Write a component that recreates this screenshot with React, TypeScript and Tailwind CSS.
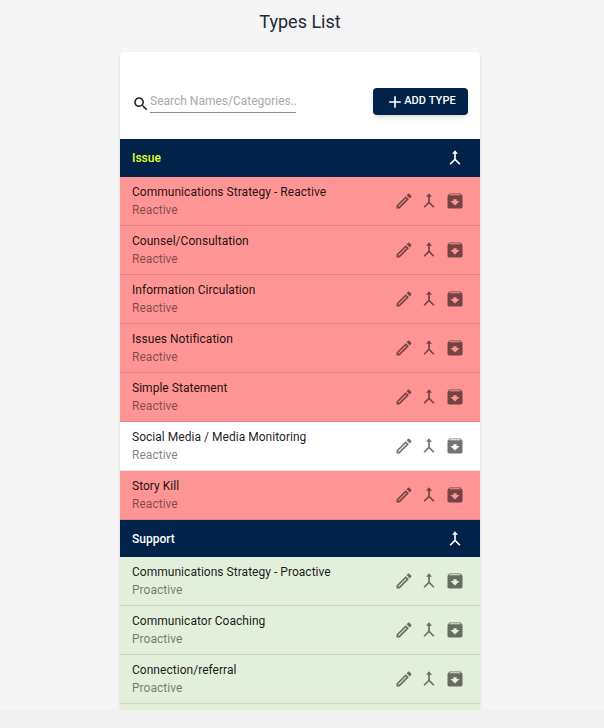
const font = "font-['Roboto','Liberation_Sans',sans-serif]";

const paths = {
  search: "M15.5 14h-.79l-.28-.27C15.41 12.59 16 11.11 16 9.5 16 5.91 13.09 3 9.5 3S3 5.91 3 9.5 5.91 16 9.5 16c1.61 0 3.09-.59 4.23-1.57l.27.28v.79l5 4.99L20.49 19l-4.99-5zm-6 0C7.01 14 5 11.99 5 9.5S7.01 5 9.5 5 14 7.01 14 9.5 11.99 14 9.5 14z",
  add: "M19 13h-6v6h-2v-6H5v-2h6V5h2v6h6v2z",
  merge: "M12 2.8L15.6 7H13V13.2L18.6 18.8L17.2 20.2L12 15L6.8 20.2L5.4 18.8L11 13.2V7H8.4Z",
  edit: "M14.06 9.02l.92.92L5.92 19H5v-.92l9.06-9.06M17.66 3c-.25 0-.51.1-.7.29l-1.83 1.83 3.75 3.75 1.83-1.83c.39-.39.39-1.02 0-1.41l-2.34-2.34c-.2-.2-.45-.29-.71-.29zm-3.6 3.19L3 17.25V21h3.75L17.81 9.94l-3.75-3.75z",
  archive: "M20.54 5.23l-1.39-1.68C18.88 3.21 18.47 3 18 3H6c-.47 0-.88.21-1.16.55L3.46 5.23C3.17 5.57 3 6.02 3 6.5V19c0 1.1.9 2 2 2h14c1.1 0 2-.9 2-2V6.5c0-.48-.17-.93-.46-1.27zM12 17.5L6.5 12H10v-2h4v2h3.5L12 17.5zM5.12 5l.81-1h12l.94 1H5.12z",
};

function Icon({ d, className }: { d: string; className: string }) {
  return (
    <svg viewBox="0 0 24 24" fill="currentColor" className={className}>
      <path d={d} />
    </svg>
  );
}

function TypeRow({ name, category, bg }: { name: string; category: string; bg: string }) {
  return (
    <div className={`flex h-[49px] shrink-0 items-center justify-between border-b border-black/10 pl-3 pr-[15px] ${bg}`}>
      <div className="flex flex-col gap-[3px]">
        <div className="text-[12px] leading-[15px] tracking-[0.03px] text-black/90">{name}</div>
        <div className="text-[12px] leading-[15px] tracking-[0.03px] text-black/50">{category}</div>
      </div>
      <div className="flex items-center gap-[5px] text-black/55">
        <Icon d={paths.edit} className="h-5 w-5" />
        <Icon d={paths.merge} className="h-5 w-5" />
        <Icon d={paths.archive} className="ml-px h-5 w-5" />
      </div>
    </div>
  );
}

function GroupHeader({ title, titleColor, height }: { title: string; titleColor: string; height: string }) {
  return (
    <div className={`flex shrink-0 items-center justify-between bg-[#012249] pl-3 pr-[15px] ${height}`}>
      <div className={`text-[12px] font-medium ${titleColor}`}>{title}</div>
      <Icon d={paths.merge} className="h-5 w-5 text-white" />
    </div>
  );
}

const reactive = [
  { name: "Communications Strategy - Reactive", bg: "bg-[#ff9494]" },
  { name: "Counsel/Consultation", bg: "bg-[#ff9494]" },
  { name: "Information Circulation", bg: "bg-[#ff9494]" },
  { name: "Issues Notification", bg: "bg-[#ff9494]" },
  { name: "Simple Statement", bg: "bg-[#ff9494]" },
  { name: "Social Media / Media Monitoring", bg: "bg-white" },
  { name: "Story Kill", bg: "bg-[#ff9494]" },
];

const proactive = ["Communications Strategy - Proactive", "Communicator Coaching", "Connection/referral"];

export default function App() {
  return (
    <div className={`flex h-[728px] flex-col overflow-hidden bg-[#f5f5f5] ${font}`}>
      <div className="flex min-h-0 flex-1 flex-col items-center overflow-hidden pr-[4px]">
        <h1 className="flex h-[52px] shrink-0 items-start pt-[10px] text-[18px] leading-[24px] text-[#1f2937]">Types List</h1>
        <div className="flex w-[360px] flex-col rounded-t bg-white shadow-sm">
          <div className="flex h-[87px] shrink-0 items-center justify-between px-3 pt-3">
            <div className="mt-[4px] flex items-end">
              <Icon d={paths.search} className="h-[18px] w-[18px] text-[#222]" />
              <div className="w-[146px] whitespace-nowrap border-b border-[#8c8c8c] pb-[3px] text-[12px] leading-[15px] text-[#aaa]">
                Search Names/Categories..
              </div>
            </div>
            <button className="flex h-[27px] w-[95px] items-center justify-center rounded bg-[#012249] text-[11px] font-medium tracking-[0.1px] text-white shadow-md">
              <Icon d={paths.add} className="-mr-px h-5 w-5" />
              ADD TYPE
            </button>
          </div>
          <GroupHeader title="Issue" titleColor="text-[#e6ff1f]" height="h-[38px]" />
          {reactive.map((r) => (
            <TypeRow key={r.name} name={r.name} category="Reactive" bg={r.bg} />
          ))}
          <GroupHeader title="Support" titleColor="text-white" height="h-[37px]" />
          {proactive.map((name) => (
            <TypeRow key={name} name={name} category="Proactive" bg="bg-[#e2efda]" />
          ))}
          <div className="h-[49px] shrink-0 bg-[#e2efda]" />
        </div>
      </div>
      <div className="h-[18px] shrink-0 bg-[#f1f1f1]" />
    </div>
  );
}
